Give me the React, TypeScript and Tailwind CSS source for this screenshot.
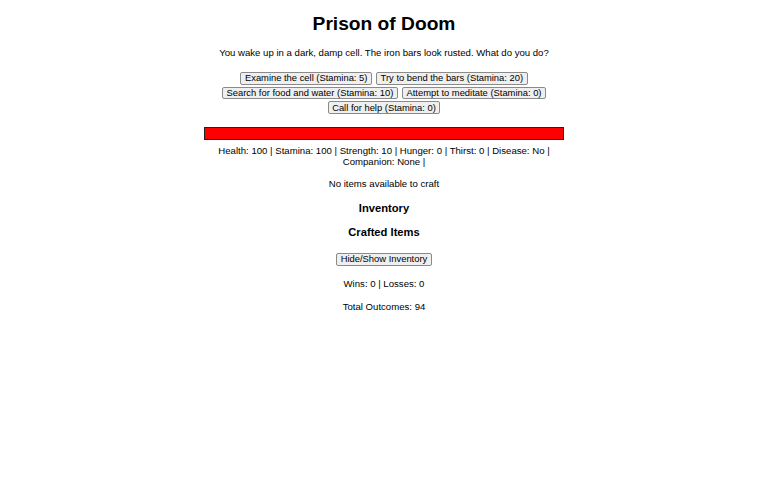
const actions = [
  { label: "Examine the cell", stamina: 5 },
  { label: "Try to bend the bars", stamina: 20 },
  { label: "Search for food and water", stamina: 10 },
  { label: "Attempt to meditate", stamina: 0 },
  { label: "Call for help", stamina: 0 },
];

const stats = [
  ["Health", "100"],
  ["Stamina", "100"],
  ["Strength", "10"],
  ["Hunger", "0"],
  ["Thirst", "0"],
  ["Disease", "No"],
  ["Companion", "None"],
];

function GameButton({ children }: { children: React.ReactNode }) {
  return (
    <button className="h-[12.8px] px-[3.6px] text-[9.4px] leading-[10px] text-black bg-[#efefef] border border-[#8a8a8a] rounded-[2px] whitespace-nowrap">
      {children}
    </button>
  );
}

export default function App() {
  return (
    <div className="min-h-screen bg-white text-black font-['Liberation_Sans',Arial,sans-serif]">
      <div className="mx-auto w-[360px] flex flex-col items-center text-center">
        <h1 className="mt-[13px] text-[19.2px] leading-[22px] font-bold">Prison of Doom</h1>
        <p className="mt-[12px] text-[9.6px] leading-[12px]">
          You wake up in a dark, damp cell. The iron bars look rusted. What do you do?
        </p>

        <div className="mt-[13px] flex flex-wrap justify-center gap-x-[4px] gap-y-[1.8px]">
          {actions.map(a => (
            <GameButton key={a.label}>
              {a.label} (Stamina: {a.stamina})
            </GameButton>
          ))}
        </div>

        <div className="mt-[13px] w-[360px] h-[13px] bg-[#ff0000] border border-[#222]" />

        <div className="mt-[5.5px] text-[9.6px] leading-[11px]">
          {stats.map(([k, v]) => (
            <span key={k}>
              {k}: {v} |{" "}
            </span>
          ))}
        </div>

        <p className="mt-[11px] text-[9.6px] leading-[11px]">No items available to craft</p>

        <h3 className="mt-[13px] text-[11.2px] leading-[13px] font-bold">Inventory</h3>
        <h3 className="mt-[11px] text-[11.2px] leading-[13px] font-bold">Crafted Items</h3>

        <div className="mt-[13.5px] flex">
          <GameButton>Hide/Show Inventory</GameButton>
        </div>

        <p className="mt-[12px] text-[9.6px] leading-[11px]">Wins: 0 | Losses: 0</p>
        <p className="mt-[12px] text-[9.6px] leading-[11px]">Total Outcomes: 94</p>
      </div>
    </div>
  );
}
